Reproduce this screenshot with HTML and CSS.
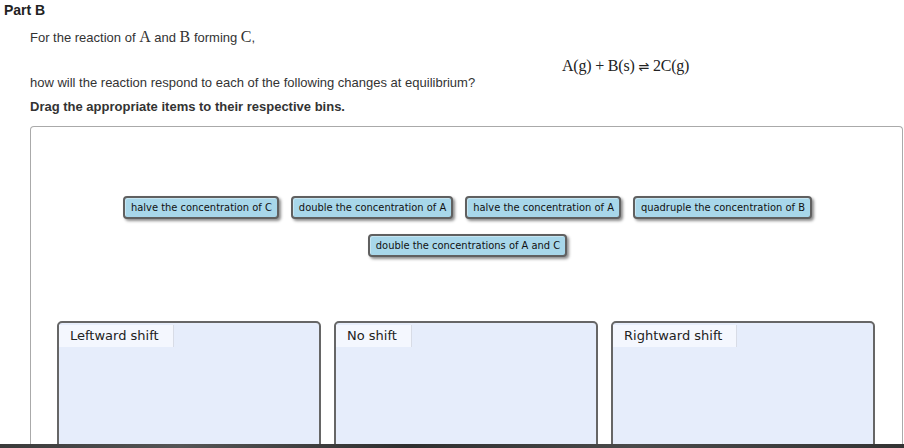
FILE: index.html
```html
<!DOCTYPE html>
<html>
<head>
<meta charset="utf-8">
<link rel="stylesheet" href="styles.css">
</head>
<body>
<h2 class="part-title">Part B</h2>
<p class="prompt lead">For the reaction of <span class="m">A</span> and <span class="m">B</span> forming <span class="m">C</span>,</p>
<div class="equation">A(g) + B(s) <span class="eq-arrow">⇌</span> 2C(g)</div>
<p class="prompt">how will the reaction respond to each of the following changes at equilibrium?</p>
<p class="prompt strong">Drag the appropriate items to their respective bins.</p>

<div class="dnd">
  <div class="pool">
    <div class="pool-row">
      <div class="chip">halve the concentration of C</div>
      <div class="chip">double the concentration of A</div>
      <div class="chip">halve the concentration of A</div>
      <div class="chip">quadruple the concentration of B</div>
    </div>
    <div class="pool-row">
      <div class="chip">double the concentrations of A and C</div>
    </div>
  </div>
  <div class="bins">
    <div class="bin"><div class="bin-label">Leftward shift</div></div>
    <div class="bin"><div class="bin-label">No shift</div></div>
    <div class="bin"><div class="bin-label">Rightward shift</div></div>
  </div>
</div>
<div class="page-edge"></div>
</body>
</html>
```
FILE: styles.css
```css
html, body {
  margin: 0;
  padding: 0;
  background: #fff;
  overflow: hidden;
}
body {
  font-family: "Liberation Sans", Arial, sans-serif;
  color: #333;
  width: 904px;
  height: 448px;
}
.part-title {
  margin: 0;
  padding: 2px 0 0 4px;
  font-size: 14px;
  line-height: 16px;
  font-weight: bold;
  color: #222;
}
.prompt {
  margin: 0;
  padding-left: 30px;
  font-size: 13px;
  line-height: 16px;
  height: 16px;
}
.prompt.lead {
  margin-top: 12px;
}
.prompt.strong {
  font-weight: bold;
  margin-top: 8px;
}
.m {
  font-family: "Liberation Serif", "DejaVu Serif", serif;
  font-size: 16px;
  line-height: 12px;
}
.equation {
  font-family: "Liberation Serif", "DejaVu Serif", serif;
  font-size: 16px;
  line-height: 18px;
  height: 18px;
  color: #222;
  padding-left: 562px;
  margin: 11px 0 0;
  letter-spacing: -0.2px;
}
.eq-arrow {
  font-family: "DejaVu Sans", sans-serif;
  font-size: 13px;
  line-height: 12px;
}
/* drag-and-drop frame; the lower part of the bins runs past the fold */
.dnd {
  margin: 11px 0 0 30px;
  width: 871px;
  height: 321px;
  border: 1px solid #aaa;
  border-bottom: 0;
  border-radius: 4px 4px 0 0;
  overflow: hidden;
}
.pool {
  padding-top: 69px;
  display: flex;
  flex-direction: column;
  align-items: center;
  gap: 15px;
}
.pool-row {
  display: flex;
  gap: 12px;
  padding-left: 2px;
}
.chip {
  font-family: "DejaVu Sans Condensed", "DejaVu Sans", sans-serif;
  font-stretch: condensed;
  font-size: 11px;
  line-height: 19px;
  color: #111;
  background: #a8d7ea;
  border: 2px solid #606060;
  border-radius: 4px;
  padding: 0 5px 0 6px;
  box-shadow: inset 1px 1px 0 rgba(255, 255, 255, 0.35), 2px 2px 3px rgba(0, 0, 0, 0.45);
}
.bins {
  display: flex;
  gap: 13px;
  padding-left: 26px;
  margin-top: 64px;
}
.bin {
  width: 260px;
  height: 140px;
  border: 2px solid #666;
  border-radius: 5px;
  background: #e6edfb;
}
.bin-label {
  display: inline-block;
  margin-top: 2px;
  font-family: "DejaVu Sans", sans-serif;
  font-size: 13px;
  line-height: 22px;
  color: #222;
  background: #f4f7fe;
  border-right: 1px solid #d8dce6;
  padding: 0 14px 0 11px;
}
.page-edge {
  position: fixed;
  left: 0;
  right: 0;
  bottom: 0;
  height: 4px;
  background: linear-gradient(90deg, #3a3a3a, #555 20%, #2e2e2e 45%, #4a4a4a 70%, #333);
}
```
